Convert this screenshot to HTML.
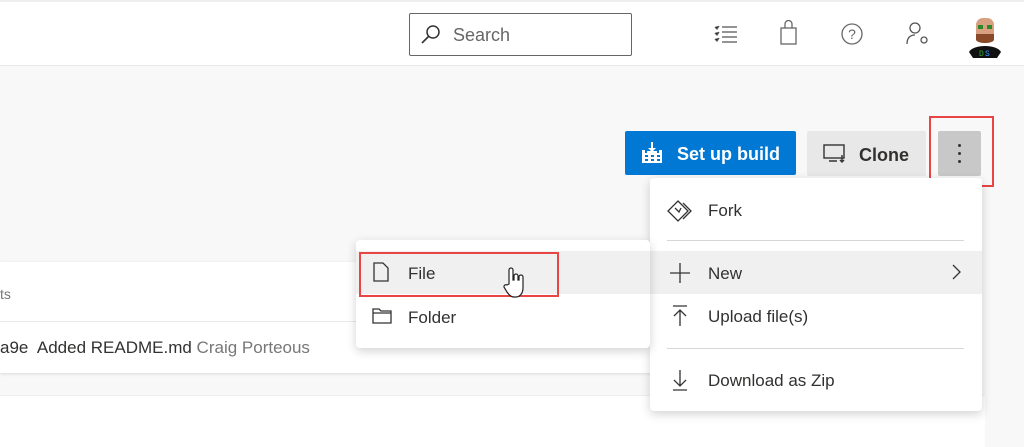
<!DOCTYPE html>
<html><head><style>
*{box-sizing:border-box;margin:0;padding:0}
body{width:1024px;height:447px;overflow:hidden;background:#f8f8f8;font-family:"Liberation Sans",sans-serif;position:relative;color:#323130}
.a{position:absolute}
.hdr{left:0;top:0;width:1024px;height:66px;background:#fff;border-bottom:1px solid #e8e8e8;border-top:2px solid #eee}
.menu{background:#fff;border-radius:4px;box-shadow:0 3px 10px rgba(0,0,0,.18)}
.t{font-size:17px;color:#323130;white-space:nowrap}
.sep{height:1px;background:#d6d6d6}
</style></head><body>
<div class="a hdr"></div>
<div class="a" style="left:409px;top:13px;width:223px;height:43px;border:1px solid #666;border-radius:2px;background:#fff"></div>
<svg class="a" style="left:420px;top:24px" width="22" height="22" viewBox="0 0 22 22"><circle cx="13" cy="8" r="6" fill="none" stroke="#333" stroke-width="1.5"/><path d="M9 12 L2 19" stroke="#333" stroke-width="1.6"/></svg>
<div class="a t" style="left:453px;top:25px;font-size:18px;color:#666">Search</div>
<svg class="a" style="left:712px;top:24px" width="28" height="20"><g stroke="#555" stroke-width="1.3"><path d="M10 3h15M10 8h15M10 13h15M10 18h15"/><path d="M3 3l2 2 2-3M3 9l2 2 2-3M3 15l2 2 2-3"/></g></svg>
<svg class="a" style="left:778px;top:20px" width="22" height="26"><g fill="none" stroke="#666" stroke-width="1.3"><rect x="3" y="8" width="15" height="16"/><path d="M7 8V4a3 3 0 0 1 7 0v4"/></g></svg>
<svg class="a" style="left:840px;top:22px" width="24" height="24"><circle cx="12" cy="12" r="10" fill="none" stroke="#666" stroke-width="1.3"/><text x="12" y="17" font-size="14" text-anchor="middle" fill="#666" font-family="Liberation Sans">?</text></svg>
<svg class="a" style="left:905px;top:20px" width="26" height="26"><g fill="none" stroke="#555" stroke-width="1.3"><circle cx="10" cy="8" r="5"/><path d="M2 24c0-6 3-9 8-9"/><circle cx="19" cy="20" r="3"/></g></svg>
<svg class="a" style="left:965px;top:14px" width="40" height="44"><path d="M4 38c4-8 28-8 32 0l-4 6H8z" fill="#111"/><rect x="11" y="4" width="18" height="24" rx="7" fill="#d8a080"/><path d="M11 20h18v6c-2 4-16 4-18 0z" fill="#8a4a2a"/><rect x="13" y="11" width="5" height="4" fill="#2a8a2a"/><rect x="22" y="11" width="5" height="4" fill="#2a8a2a"/><text x="14" y="42" font-size="8" fill="#3a3" font-family="Liberation Mono">D</text><text x="20" y="42" font-size="8" fill="#39f" font-family="Liberation Mono">S</text></svg>

<!-- card -->
<div class="a" style="left:0;top:262px;width:660px;height:111px;background:#fff;box-shadow:0 1px 3px rgba(0,0,0,.12)"></div>
<div class="a sep" style="left:0;top:321px;width:660px;background:#eaeaea"></div>
<div class="a t" style="left:0;top:286px;font-size:14px;color:#777">ts</div>
<div class="a t" style="left:0;top:338px">a9e&nbsp; Added README.md <span style="color:#777">Craig Porteous</span></div>
<div class="a" style="left:0;top:395px;width:985px;height:52px;background:#fff;border-top:1px solid #eee"></div>

<!-- buttons -->
<div class="a" style="left:625px;top:131px;width:171px;height:44px;background:#0078d4;border-radius:2px"></div>
<svg class="a" style="left:641px;top:142px" width="22" height="22"><g fill="#fff"><path d="M10 0h2v6h3l-4 4-4-4h3z"/><path d="M1 8h3v3h2V9h10v2h2V8h3v13H1z"/></g><g fill="#0078d4"><rect x="4" y="13" width="3" height="2"/><rect x="10" y="13" width="3" height="2"/><rect x="16" y="13" width="3" height="2"/><rect x="4" y="17" width="3" height="2"/><rect x="10" y="17" width="3" height="2"/><rect x="16" y="17" width="3" height="2"/></g></svg>
<div class="a t" style="left:677px;top:144px;color:#fff;font-weight:bold;font-size:18px">Set up build</div>
<div class="a" style="left:807px;top:131px;width:119px;height:45px;background:#e8e8e8;border-radius:2px"></div>
<svg class="a" style="left:823px;top:144px" width="24" height="20"><g fill="none" stroke="#333" stroke-width="1.4"><rect x="1" y="1" width="20" height="13"/><path d="M6 17h8M19 11v7m-2-2 2 2 2-2"/></g></svg>
<div class="a t" style="left:859px;top:145px;font-weight:bold;font-size:18px">Clone</div>
<div class="a" style="left:938px;top:131px;width:43px;height:45px;background:#c8c8c8;border-radius:2px"></div>
<div class="a" style="left:958px;top:144px;width:3px;height:3px;background:#333;border-radius:50%;box-shadow:0 8px 0 #333,0 16px 0 #333"></div>
<div class="a" style="left:929px;top:116px;width:65px;height:71px;border:2px solid #e84545"></div>

<!-- main menu -->
<div class="a menu" style="left:650px;top:178px;width:332px;height:233px"></div>
<svg class="a" style="left:667px;top:200px" width="26" height="22"><g fill="none" stroke="#333" stroke-width="1.3"><path d="M11 1l10 10-10 10L1 11z"/><path d="M16 3l8 8-8 8"/><path d="M8 8l4 4 2-4"/></g></svg>
<div class="a t" style="left:708px;top:201px">Fork</div>
<div class="a sep" style="left:667px;top:240px;width:297px"></div>
<div class="a" style="left:650px;top:251px;width:332px;height:43px;background:#f0f0f0"></div>
<svg class="a" style="left:669px;top:262px" width="22" height="22"><path d="M11 1v20M1 11h20" stroke="#333" stroke-width="1.3"/></svg>
<div class="a t" style="left:708px;top:264px">New</div>
<svg class="a" style="left:951px;top:264px" width="12" height="16"><path d="M2 1l7 7-7 7" fill="none" stroke="#333" stroke-width="1.3"/></svg>
<svg class="a" style="left:671px;top:305px" width="18" height="22"><path d="M2 1h14M9 5v16M3 11l6-6 6 6" fill="none" stroke="#333" stroke-width="1.3"/></svg>
<div class="a t" style="left:708px;top:307px">Upload file(s)</div>
<div class="a sep" style="left:667px;top:348px;width:297px"></div>
<svg class="a" style="left:671px;top:369px" width="18" height="22"><path d="M2 21h14M9 1v16M3 11l6 6 6-6" fill="none" stroke="#333" stroke-width="1.3"/></svg>
<div class="a t" style="left:708px;top:371px">Download as Zip</div>

<!-- submenu -->
<div class="a menu" style="left:356px;top:240px;width:294px;height:108px"></div>
<div class="a" style="left:356px;top:251px;width:294px;height:43px;background:#f0f0f0"></div>
<svg class="a" style="left:373px;top:262px" width="16" height="20"><path d="M1 1h9l5 5v13H1z" fill="none" stroke="#333" stroke-width="1.3"/></svg>
<div class="a t" style="left:408px;top:264px">File</div>
<svg class="a" style="left:372px;top:308px" width="20" height="16"><path d="M1 1h6l2 2h10v12H1zM1 5h18" fill="none" stroke="#333" stroke-width="1.3"/></svg>
<div class="a t" style="left:408px;top:308px">Folder</div>
<div class="a" style="left:359px;top:252px;width:200px;height:45px;border:2px solid #e84545"></div>
<svg class="a" style="left:500px;top:266px" width="28" height="34"><path d="M9 18V4a2 2 0 0 1 4 0v10h1V10a2 2 0 0 1 4 0v4h1v-3a2 2 0 0 1 4 0v11c0 5-3 9-7 9h-2c-3 0-5-2-7-5l-3-5a2 2 0 0 1 3-2z" fill="#fff" stroke="#222" stroke-width="1.2"/></svg>
</body></html>
